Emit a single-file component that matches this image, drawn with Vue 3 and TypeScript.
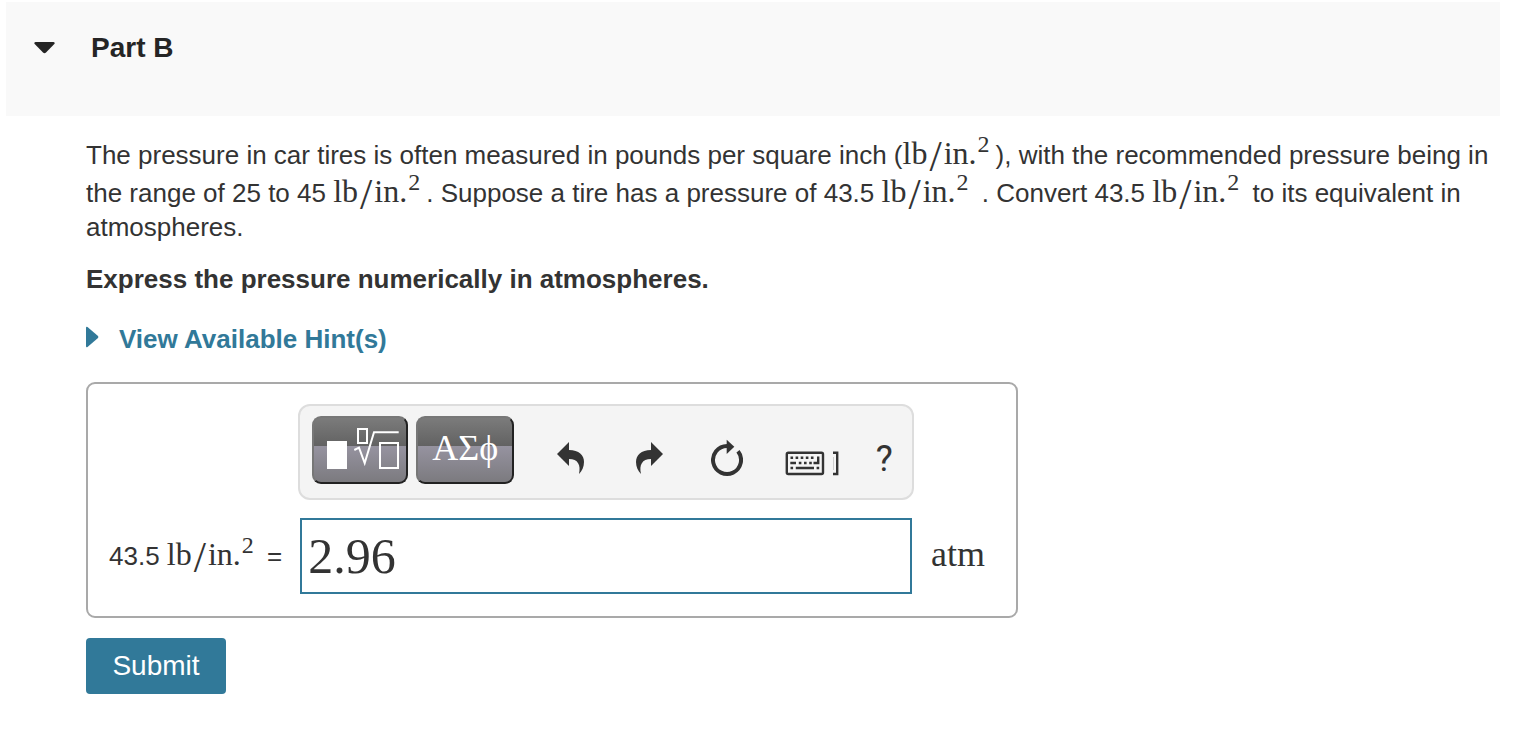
<script setup lang="ts">
import { h, ref } from 'vue'

const answer = ref('2.96')

const PressureUnit = () =>
  h('span', { class: 'unit' }, ['lb', h('span', { class: 'slash' }, '/'), 'in.', h('sup', '2')])
</script>

<template>
  <section class="part">
    <header class="part-header">
      <button class="toggle" type="button" aria-label="Collapse Part B" aria-expanded="true">
        <svg width="22" height="12" viewBox="0 0 22 12">
          <path d="M1.5 0H19.5Q21.5 .5 20.3 2L12 10.6Q10.5 12 9 10.6L.7 2Q-.5 .5 1.5 0Z" fill="#252525" />
        </svg>
      </button>
      <h2>Part B</h2>
    </header>

    <div class="content">
      <p class="question">
        The pressure in car tires is often measured in pounds per square inch (<PressureUnit />), with the
        recommended pressure being in the range of 25 to 45 <PressureUnit />. Suppose a tire has a pressure
        of 43.5 <PressureUnit /> . Convert 43.5 <PressureUnit /> to its equivalent in atmospheres.
      </p>
      <p class="instruction">Express the pressure numerically in atmospheres.</p>

      <a class="hints" href="#hints">
        <svg width="13" height="22" viewBox="0 0 13 22">
          <path d="M0 2Q0 0 1.5 1L12 10Q12.8 11 12 12L1.5 21Q0 22 0 20Z" fill="#317999" />
        </svg>
        <span>View Available Hint(s)</span>
      </a>

      <form class="answer-form" @submit.prevent>
        <div class="answer-box">
          <div class="toolbar" role="toolbar" aria-label="Math tools">
            <button class="palette" type="button" aria-label="Templates">
              <svg width="92" height="64" viewBox="0 0 92 64" fill="none" stroke="#fff" stroke-width="2">
                <path d="M13 23H33V51H13Z" fill="#fff" stroke="none" />
                <path d="M44 11H53V25H44Z" />
                <path d="M40.3 32L45 29.7L50.7 45L60 14.3H84.7" />
                <path d="M66 25H84V50H66Z" />
              </svg>
            </button>
            <button class="palette symbols" type="button" aria-label="Symbols">ΑΣϕ</button>
            <div class="tools">
              <button class="tool" type="button" aria-label="Undo">
                <svg width="28" height="68" viewBox="0 0 28 68">
                  <path d="M0 38L12 26V34C22 34 27 39 27 46C27 51 25 55 22 58C24 49 21 43 12 43V50Z" fill="#333" />
                </svg>
              </button>
              <button class="tool" type="button" aria-label="Redo">
                <svg width="28" height="68" viewBox="0 0 28 68">
                  <path d="M28 38L16 26V34C6 34 1 39 1 46C1 51 3 55 6 58C4 49 7 43 16 43V50Z" fill="#333" />
                </svg>
              </button>
              <button class="tool" type="button" aria-label="Reset">
                <svg width="32" height="68" viewBox="0 0 32 68">
                  <path d="M27 35.3A14 14 0 1 1 16 30" fill="none" stroke="#333" stroke-width="4" />
                  <path d="M15.7 23.7L23.3 30.7L15.7 38Z" fill="#333" />
                </svg>
              </button>
              <button class="tool keyboard" type="button" aria-label="Keyboard shortcuts">
                <svg width="54" height="68" viewBox="0 0 54 68" fill="none" stroke="#333" stroke-width="2.4">
                  <rect x="1.8" y="36.8" width="36.2" height="21.2" rx="1.5" />
                  <path d="M5.5 41.7H31" stroke-dasharray="2.6 2.5" />
                  <path d="M5.3 47H11M13.8 47H16.4M19 47H21.6M24.2 47H26.8M28.5 47H33.2V40.6" />
                  <path d="M5.5 52H8.1M10.8 52H29M31.6 52H34.2" />
                  <path d="M48 36.8H52.2V58H48" />
                  <path d="M48.5 41V54" stroke="#ccc" stroke-width="1" />
                </svg>
              </button>
              <button class="tool help" type="button" aria-label="Help">?</button>
            </div>
          </div>
          <label class="prefix" for="answer">43.5 <PressureUnit /> =</label>
          <input id="answer" v-model="answer" type="text" autocomplete="off" />
          <span class="suffix">atm</span>
        </div>
        <button class="submit" type="submit">Submit</button>
      </form>
    </div>
  </section>
</template>

<style>
body {
  background: #fff;
}
</style>

<style scoped>
.part {
  padding: 2px 28px 42px 6px;
  color: #333;
  font-family: "Liberation Sans", Arial, sans-serif;
  font-size: 26px;
  line-height: 34px;
}
button {
  margin: 0;
  padding: 0;
  border: 0;
  background: none;
  font: inherit;
  cursor: pointer;
}
svg {
  display: block;
}
.part-header {
  display: flex;
  align-items: center;
  gap: 35px;
  padding: 28px 28px 50px;
  background: #f9f9f9;
}
h2 {
  margin: 0;
  color: #252525;
  font-size: 28px;
  line-height: 36px;
}
.content {
  padding: 18px 0 0 80px;
}
p {
  margin: 0;
}
.instruction {
  margin-top: 18px;
  font-weight: bold;
}
:deep(.unit) {
  display: inline-block;
  margin-right: 6px;
  font-family: "Liberation Serif", "Times New Roman", serif;
  font-size: 32px;
  line-height: 38px;
  white-space: nowrap;
}
:deep(.unit .slash) {
  position: relative;
  top: 7px;
  margin: 0 2px;
  font-size: 44px;
  line-height: 0;
}
:deep(.unit sup) {
  position: relative;
  top: -12px;
  margin-left: 1px;
  font-size: 24px;
  line-height: 0;
  vertical-align: baseline;
}
.hints {
  display: flex;
  align-items: center;
  gap: 20px;
  width: fit-content;
  margin-top: 26px;
  color: #317999;
  font-weight: bold;
  text-decoration: none;
}
.hints svg {
  margin-bottom: 4px;
}
.answer-form {
  margin-top: 26px;
}
.answer-box {
  display: grid;
  grid-template-columns: auto minmax(0, 1fr) auto;
  align-items: center;
  box-sizing: border-box;
  max-width: 932px;
  padding: 20px 31px 22px 21px;
  border: 2px solid #a9a9a9;
  border-radius: 9px;
}
.toolbar {
  display: flex;
  grid-column: 2;
  gap: 8px;
  margin-bottom: 18px;
  padding: 10px 0 14px 12px;
  border: 2px solid #ddd;
  border-radius: 12px;
  background: #f4f4f4;
}
.palette {
  box-sizing: border-box;
  width: 96px;
  height: 68px;
  border: 2px solid #777;
  border-right-color: #222;
  border-bottom-color: #222;
  border-radius: 9px;
  background: linear-gradient(#7d7d7d, #626262 44%, #9693a0 44%, #7a797d) border-box;
  color: #fff;
}
.symbols {
  width: 98px;
  padding-bottom: 4px;
  font-family: "Liberation Serif", "Times New Roman", serif;
  font-size: 36px;
}
.tools {
  display: flex;
  margin-left: 10px;
}
.tool {
  display: flex;
  justify-content: center;
  width: 78px;
  height: 68px;
}
.keyboard {
  width: 92px;
}
.help {
  align-items: center;
  width: 52px;
  padding-top: 18px;
  color: #333;
  font-family: Roboto, sans-serif;
  font-size: 36px;
}
.prefix {
  grid-column: 1;
  padding: 0 16px 4px 0;
  white-space: nowrap;
}
input {
  box-sizing: border-box;
  min-width: 0;
  height: 76px;
  margin: 0 2px;
  padding: 0 6px;
  border: 2px solid #317999;
  border-radius: 0;
  outline: 0;
  background: #fff;
  color: #333;
  font-family: "Liberation Serif", "Times New Roman", serif;
  font-size: 50px;
}
.suffix {
  padding: 0 0 4px 17px;
  font-family: "Liberation Serif", "Times New Roman", serif;
  font-size: 36px;
}
.submit {
  min-width: 140px;
  margin-top: 20px;
  padding: 11px 26px;
  border-radius: 4px;
  background: #317999;
  color: #fff;
  font-size: 28px;
}
</style>
